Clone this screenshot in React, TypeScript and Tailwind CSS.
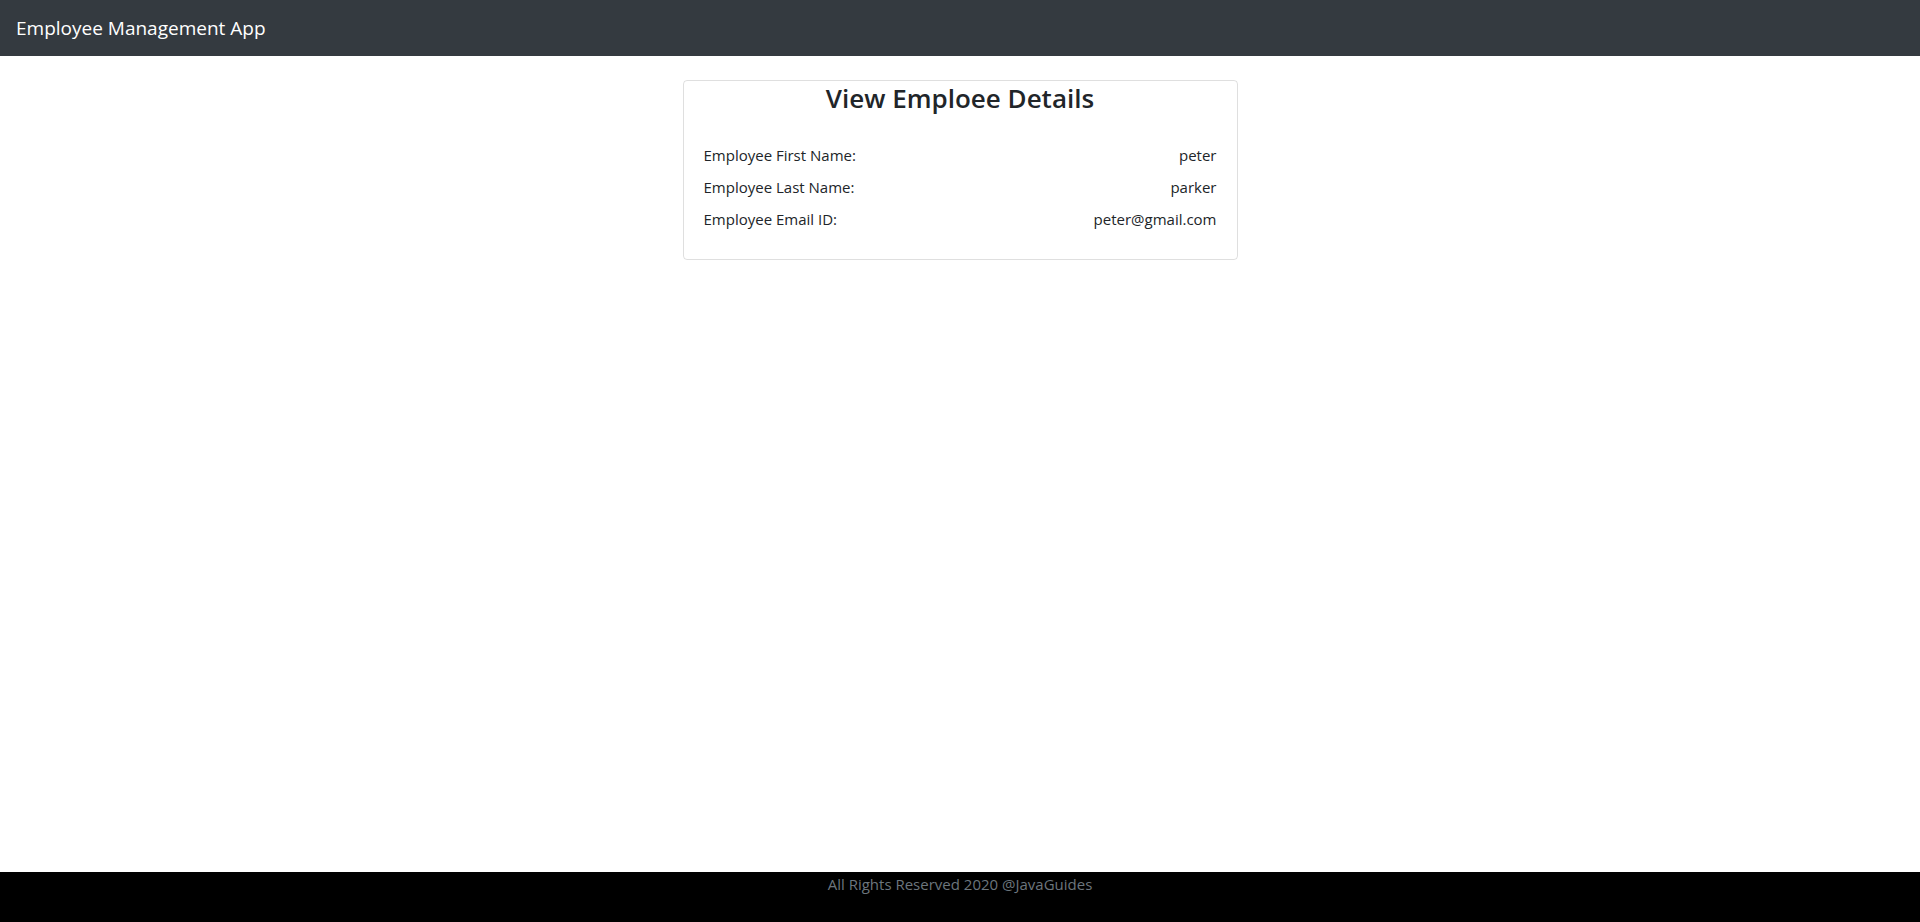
const employee = {
  firstName: "peter",
  lastName: "parker",
  emailId: "peter@gmail.com",
};

function DetailRow({ label, value }: { label: string; value: string }) {
  return (
    <div className="flex justify-between items-center h-6 mb-2 leading-6">
      <span>{label}</span>
      <span>{value}</span>
    </div>
  );
}

export default function App() {
  return (
    <div
      className="h-screen flex flex-col bg-white text-[#212529] text-[15px] leading-6"
      style={{ fontFamily: '"Open Sans", "Noto Sans", sans-serif' }}
    >
      {/* Header */}
      <header className="h-14 bg-[#343a40] flex items-center px-4 shrink-0">
        <span className="text-white text-[19px] leading-[30px]">Employee Management App</span>
      </header>

      {/* Content */}
      <main className="flex-1">
        <div className="w-[555px] mx-auto mt-6 border border-black/[0.125] rounded">
          <h3 className="text-[26px] h-[34px] leading-[34px] font-semibold text-center mb-2">
            View Emploee Details
          </h3>
          <div className="p-5">
            <DetailRow label="Employee First Name:" value={employee.firstName} />
            <DetailRow label="Employee Last Name:" value={employee.lastName} />
            <DetailRow label="Employee Email ID:" value={employee.emailId} />
          </div>
        </div>
      </main>

      {/* Footer */}
      <footer className="h-[50px] bg-black text-center shrink-0">
        <span className="text-[#6c757d]">All Rights Reserved 2020 @JavaGuides</span>
      </footer>
    </div>
  );
}
